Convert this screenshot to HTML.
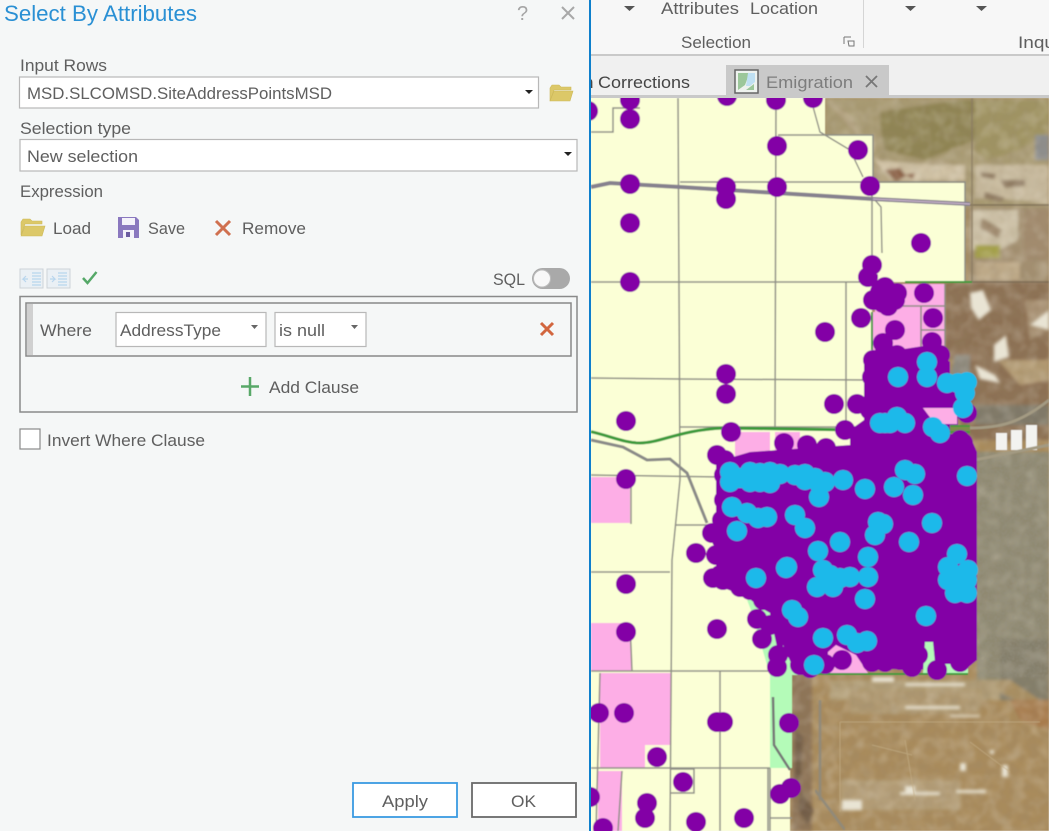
<!DOCTYPE html>
<html><head><meta charset="utf-8"><style>
html,body{margin:0;padding:0;width:1049px;height:831px;overflow:hidden;background:#f5f7f7}
svg{display:block}
text{font-family:"Liberation Sans",sans-serif;font-size:17px;fill:#5e5e5e}
</style></head><body>
<svg width="1049" height="831" viewBox="0 0 1049 831" xmlns="http://www.w3.org/2000/svg">
<defs>
<filter id="n" x="0" y="0" width="100%" height="100%"><feTurbulence type="fractalNoise" baseFrequency="0.1" numOctaves="2" seed="4"/><feColorMatrix values="0 0 0 0 .30  0 0 0 0 .24  0 0 0 0 .15  1 1 0 0 -.72"/><feGaussianBlur stdDeviation="1"/></filter>
<filter id="l" x="0" y="0" width="100%" height="100%"><feTurbulence type="fractalNoise" baseFrequency="0.08" numOctaves="2" seed="11"/><feColorMatrix values="0 0 0 0 .88  0 0 0 0 .83  0 0 0 0 .72  1 1 0 0 -.86"/><feGaussianBlur stdDeviation="1"/></filter>
<filter id="c" x="0" y="0" width="100%" height="100%"><feTurbulence type="fractalNoise" baseFrequency="0.4" numOctaves="2" seed="7"/><feColorMatrix values="0 0 0 0 .3  0 0 0 0 .28  0 0 0 0 .22  1.400 1.400 0 0 -1.050"/></filter>
<filter id="s"><feGaussianBlur stdDeviation="1.500"/></filter>
<filter id="t" x="-2%" y="-2%" width="104%" height="104%"><feGaussianBlur stdDeviation=".35"/></filter>
<filter id="m" x="0" y="0" width="100%" height="100%"><feGaussianBlur stdDeviation=".5"/></filter>
<clipPath id="map"><rect x="591" y="98" width="458" height="733"/></clipPath>
</defs>

<!-- ribbon -->
<rect x="591" y="0" width="458" height="54" fill="#f7f7f7"/>
<rect x="591" y="54" width="458" height="2" fill="#c9c9c9"/>
<rect x="591" y="56" width="458" height="39" fill="#f0f0f0"/>
<rect x="591" y="95" width="458" height="3" fill="#c9c9c9"/>
<rect x="726" y="65" width="163" height="30" fill="#c9c9c9"/>
<rect x="863" y="0" width="1" height="48" fill="#d5d5d5"/>
<path d="M624 6h11l-5.500 5zM905 6h11l-5.500 5zM976 6h11l-5.500 5z" fill="#555"/>
<path d="M844 37h7M844 37v7M848 41h6v5h-5z" stroke="#777" fill="none"/>
<rect x="735" y="70" width="23" height="23" fill="#eef2ee" stroke="#666" stroke-width="1.500"/>
<path d="M738 73h10v4l-3 8-7 5z" fill="#9cc79a"/><path d="M748 73h7v9l-5 4h-4z" fill="#bfe0f2"/><path d="M746 90l8-6v6z" fill="#9cc79a"/>
<path d="M866 76l11 11M877 76l-11 11" stroke="#777" stroke-width="1.800"/>

<!-- map -->
<g clip-path="url(#map)"><g filter="url(#m)">
<rect x="591" y="98" width="458" height="733" fill="#a98b5c"/>
<g filter="url(#s)">
<!-- north -->
<rect x="825" y="98" width="224" height="110" fill="#a89a72"/>
<path d="M880 112L960 100H975V140L950 150L925 160L885 150L880 125Z" fill="#8f8453"/>
<path d="M975 100H1049V130L1020 150L985 160L975 150Z" fill="#a09463"/>
<path d="M826 100L850 115L860 135L875 135V183H965V170L940 160L900 165L880 160Z" fill="#b5a583"/>
<path d="M875 160L890 180H965V165L930 165Z" fill="#d1c3a6"/>
<path d="M885 170l15-2 6 8-10 6zM905 175l10-2-2 6z" fill="#8a5f45"/>
<path d="M975 165H1049V205L1020 200L975 198Z" fill="#c9bb9f"/>
<path d="M980 172l16 2-2 5-12-2zM1000 180l25 0 0 6-20 2zM985 192l20 6-5 4-16-4z" fill="#8f7a62"/>
<rect x="1035" y="135" width="14" height="25" fill="#8d8f90"/>
<rect x="968" y="207" width="81" height="76" fill="#a38f70"/>
<path d="M972 210H1018V240L1000 250H972Z" fill="#cec2a8"/>
<path d="M982 218l20 12-4 8-18-10z" fill="#9b8468"/>
<path d="M1024 210H1049V260H1024Z" fill="#a28b6e"/>
<path d="M975 245H1000V258H975Z" fill="#a5a24a"/>
<path d="M975 262H1020V280H975Z" fill="#bda988"/>
<path d="M1018 282H1049V298H1018Z" fill="#4a4a22"/>
<!-- middle -->
<path d="M945 282H1049V440H960V360H945Z" fill="#8c6f52"/>
<path d="M955 355H970V375H950Z" fill="#8d8a80"/>
<path d="M1025 300H1049V330L1030 340Z" fill="#a68e70"/>
<path d="M998 360H1049V380L1020 385Z" fill="#b29a72"/>
<path d="M975 405H1049V425H975Z" fill="#7e7868"/>
<!-- city -->
<rect x="977" y="452" width="72" height="230" fill="#8f8a72"/>
<rect x="1000" y="640" width="49" height="60" fill="#837e6b"/>
<path d="M975 680H1010L1040 700H1049V720L1015 700Z" fill="#a98f62"/>
<!-- south -->
<path d="M1010 700H1049V730L1020 720Z" fill="#a87c4d"/>
<path d="M792 675H812V831H792Z" fill="#8d7356"/>
<path d="M795 730l8 6-2 40-6 8zM800 790l14 20-6 15-10-15z" fill="#6f5a45"/>
<path d="M830 680H1000V700H830Z" fill="#b09c74"/>
<path d="M850 690h130v24h-130z" fill="#af9870"/>
<path d="M840 780h120v30h-120z" fill="#b39c75"/>
</g>
<rect x="591" y="98" width="458" height="733" filter="url(#n)" opacity=".3"/>
<rect x="591" y="98" width="458" height="733" filter="url(#l)" opacity=".35"/>
<rect x="977" y="452" width="72" height="225" filter="url(#c)" opacity=".55"/>
<g fill="#e9e4d4" filter="url(#s)">
<path d="M970 293l13-3 8 20-12 10-8-12zM994 345l12-10 3 22-15 5zM1030 325l19-15v20zM975 365l20 10 5 8-20-4z"/>
<path d="M872 677h22v5h-22zM905 683h60v3h-60zM905 706h55v3h-55zM950 715h30v2h-30zM956 790h30v3h-30zM900 792h40v3h-40zM842 800h20v10h-20zM905 786h10v8h-10zM960 763h6v8h-6zM1002 765h6v12h-6zM990 750h4v4h-4z"/>
</g>
<path d="M840 722l200 0M840 722v90M872 745l40 10M905 740l10 60M970 742l40 30" stroke="#c2ad84" stroke-width="1" fill="none" opacity=".7"/>
<path d="M820 700v100M815 790l30 40" stroke="#8f8a7c" stroke-width="2.500" fill="none" filter="url(#m)"/>
<path d="M996 433h11v17h-11zM1011 430h11v20h-11zM1026 425h11v25h-11z" fill="#f3f3f0"/>
<path d="M970 428c30 0 50-5 79-28M975 460l74-15" stroke="#a39a82" stroke-width="3" fill="none"/>
<path d="M970 205H1049M965 282H1049" stroke="#6e5f4b" stroke-width="2" opacity=".5"/>
<path d="M972 98V283" stroke="#8a7b63" stroke-width="2" opacity=".6"/>

<!-- parcels -->
<path d="M591 98H825V135H873V183H965V282H872V430H860V600H770V768H790V831H591Z" fill="#fbffd6"/>
<path d="M745 590H860V675H770Z" fill="#b4fbb8"/>
<path d="M770 675H792V768H770Z" fill="#b4fbb8"/>
<path d="M875 284H945V355H872V312H875Z" fill="#fdaee6"/>
<path d="M735 432H770V460H735ZM775 432H800V452H775Z" fill="#fdaee6"/>
<path d="M591 477H630V523H591ZM591 623H631V671H591ZM600 673H671V745H645V768H600ZM598 771H622V831H598Z" fill="#fdaee6"/>

<!-- parcel lines -->
<g fill="none" stroke="#8f8f86" stroke-width="1.500">
<path d="M591 132H613V108H640M678 98L680 480L672 560L670 831M776 98L775 427M846 282V427M778 135H873V183M680 182H965V282M872 183V282H591"/>
<path d="M591 378L679 379L870 380M680 427H860M591 475L720 477M675 525H720M591 572H670M591 671H770M591 768H770M720 671V831M770 768V831M631 477V524M630 623L632 671M600 673L596 831M622 771L618 831M671 769H694V793H671M768 768V831M770 818H792M945 284V355M921 306V350M875 306H945M921 330H945"/>
<path d="M812 103L820 132L850 150L863 177M875 200L881 207L882 253" stroke-width="1.400"/>
<path d="M773 697L774 745L790 770" stroke="#777" stroke-width="2.500"/>
<path d="M591 187L610 183L680 187L777 193L873 199L970 204" stroke="#86818e" stroke-width="4"/>
<path d="M873 199L970 204" stroke="#c9b3cc" stroke-width="1.200"/>
<path d="M591 440L623 447L647 460L670 459L687 473L707 523" stroke="#8a8a88" stroke-width="3"/>
<path d="M591 431.700C610 436 625 443 640 443C660 443 680 430 723 428L857 430" stroke="#3a9a3a" stroke-width="3"/>
<path d="M905 282H972M872 312V350M800 674H968M950 426H970M950 432H970" stroke="#3a9a3a" stroke-width="2"/>
</g>

<!-- purple -->
<path d="M864 355L930 345L950 362V390L958 408V428L970 436L977 452V660L965 670L790 668L777 647L770 615L747 597L716 585V462L750 452L850 445V430L864 420Z" fill="#8300a6"/>
<path d="M923 408H957V424H935Z" fill="#fdaee6"/>
<path d="M950 425H970V434H950Z" fill="#7d8f4a"/>
<path d="M950 426H970M950 432H970" stroke="#3a9a3a" stroke-width="1.500"/>
<path d="M828 652L836 645L856 655L868 673H828Z" fill="#fdaee6"/>
<path d="M925 642L933 642L936 673H923ZM945 664H968V673H945ZM783 645L795 672H785ZM747 600L770 613L772 635L778 657H770Z" fill="#b4fbb8"/>
<path fill="none" stroke="#8300a6" stroke-width="20" stroke-linecap="round" d="
M588 111h0M630 100h0M630 119h0M727 96h0M776 100h0M813 98h0M777 146h0M858 150h0M630 184h0M726 187h0M726 199h0M777 187h0M870 186h0M630 223h0M921 243h0M630 282h0
M872 265h0M868 277h0M885 287h0M897 293h0M873 300h0M883 303h0M895 300h0M880 292h0M890 296h0M888 306h0M924 293h0M933 318h0M861 318h0M825 332h0M895 330h0M883 343h0M897 355h0M873 360h0M872 377h0M885 352h0M923 358h0M940 355h0M932 342h0M967 413h0M950 395h0
M726 374h0M726 394h0M626 421h0M834 404h0M857 404h0M731 432h0M845 430h0M626 479h0M717 455h0M725 460h0M696 553h0
M784 443h0M807 445h0M826 448h0M963 443h0M965 480h0M960 440h0M880 400h0M878 420h0M870 410h0M905 410h0M880 430h0
M724 475h0M724 500h0M722 520h0M712 533h0M722 540h0M716 555h0M720 575h0M713 578h0M723 580h0M740 587h0M750 590h0M763 600h0M757 619h0M762 639h0M770 625h0M778 655h0
M626 584h0M626 632h0M717 629h0M599 713h0M624 713h0M717 722h0M723 722h0M789 723h0M657 757h0M683 782h0M647 803h0M645 818h0M696 822h0M744 818h0M603 828h0M590 797h0M780 794h0M791 788h0
M777 667h0M842 660h0M912 667h0M937 670h0M810 668h0M800 665h0M825 664h0M872 662h0M885 662h0M900 660h0M960 662h0M967 650h0M967 630h0M967 610h0M918 655h0M795 650h0"/>
<!-- cyan -->
<path fill="none" stroke="#1fb9ea" stroke-width="20" stroke-linecap="round" d="
M927 362h0M898 377h0M927 377h0M947 383h0M958 383h0M967 382h0M965 393h0M963 408h0M885 423h0M880 423h0M890 423h0M897 417h0M905 423h0M933 427h0M940 433h0
M730 472h0M730 482h0M740 478h0M750 472h0M750 482h0M760 473h0M760 482h0M770 472h0M770 483h0M780 474h0M795 475h0M805 474h0M805 480h0M815 478h0M825 482h0M843 480h0M819 497h0M820 485h0
M865 489h0M905 470h0M915 474h0M894 487h0M913 495h0M967 476h0M732 507h0M747 513h0M758 518h0M767 517h0M795 515h0M805 528h0M737 531h0M878 522h0M883 524h0M875 535h0M932 523h0M909 542h0M840 542h0M818 551h0M868 557h0M957 554h0M787 567h0
M756 578h0M786 568h0M823 570h0M817 587h0M833 587h0M850 577h0M868 577h0M830 575h0M840 578h0M865 599h0M948 567h0M948 580h0M968 570h0M967 593h0M955 593h0M967 580h0M955 575h0M926 616h0M792 610h0M798 617h0M823 638h0M847 635h0M867 641h0M857 643h0M814 665h0"/>
</g></g>

<!-- ribbon text -->
<g filter="url(#t)">
<text x="661" y="14" textLength="78" lengthAdjust="spacingAndGlyphs">Attributes</text>
<text x="750" y="14" textLength="68" lengthAdjust="spacingAndGlyphs">Location</text>
<text x="681" y="48" textLength="70" lengthAdjust="spacingAndGlyphs">Selection</text>
<text x="1018" y="48" textLength="37" lengthAdjust="spacingAndGlyphs">Inqu</text>
<text x="584" y="88" style="fill:#444">n</text>
<text x="598" y="88" textLength="92" lengthAdjust="spacingAndGlyphs" style="fill:#444">Corrections</text>
<text x="766" y="88" textLength="87" lengthAdjust="spacingAndGlyphs" style="fill:#7d7d7d">Emigration</text>
</g>

<!-- panel -->
<rect x="0" y="0" width="589" height="831" fill="#f5f7f7"/>
<rect x="589" y="0" width="2" height="831" fill="#0f80cc"/>

<text x="4" y="21" textLength="193" lengthAdjust="spacingAndGlyphs" style="font-size:22px;fill:#2a90d4" filter="url(#t)">Select By Attributes</text>
<text x="517" y="20" style="font-size:20px;fill:#a5a5a5" filter="url(#t)">?</text>
<path d="M562 7l12 12M574 7l-12 12" stroke="#a8a8a8" stroke-width="2"/>

<g fill="#fff" stroke="#b8b8b8" stroke-width="1.200">
<rect x="19.500" y="77" width="519" height="31"/>
<rect x="20" y="139.500" width="557" height="31.500"/>
<rect x="116" y="312.500" width="150" height="34"/>
<rect x="275" y="312.500" width="91" height="34"/>
</g>
<path d="M525 90h8l-4 4zM564 152h8l-4 4z" fill="#222"/>
<path d="M251 325h7l-3.500 4zM351 325h7l-3.500 4z" fill="#666"/>

<!-- folders -->
<g fill="#dcc868" stroke="#cdb95a" stroke-width=".6">
<path d="M550 88l2-3h7l2 2h10v3h-17l-4 11z"/><path d="M550 101l4-10h19l-3 10z"/>
<path d="M21 222l2-3h7l2 2h10v3h-17l-4 11z"/><path d="M21 236l4-10h20l-3 10z"/>
</g>
<!-- save -->
<path d="M118 217h18l3 3v18h-21z" fill="#8a78bf"/><rect x="122" y="218" width="13" height="7" fill="#f4f2fa"/><rect x="123" y="230" width="11" height="8" fill="#f4f2fa"/><rect x="126" y="232" width="4" height="5" fill="#6c5ca0"/>
<!-- remove -->
<path d="M216 221l14 14M230 221l-14 14" stroke="#d0704f" stroke-width="3"/>

<!-- indent icons -->
<g fill="#eaf0f5" stroke="#cdd3d8"><rect x="20" y="269" width="23" height="19"/><rect x="47" y="269" width="23" height="19"/></g>
<path d="M32 273h9M32 276h9M32 279h9M32 282h9M32 285h9M58 273h9M58 276h9M58 279h9M58 282h9M58 285h9" stroke="#b8d6ee" stroke-width="1.200"/>
<path d="M28 279h-5l3-3M23 279l3 3M50 279h5l-3-3M55 279l-3 3" stroke="#b8d6ee" stroke-width="1.200" fill="none"/>
<path d="M83 278l4.500 5 9-11" stroke="#55a868" stroke-width="2.500" fill="none"/>

<!-- toggle -->
<rect x="532" y="268" width="38" height="21" rx="10.500" fill="#a9a9a9"/>
<circle cx="542" cy="278.500" r="8.500" fill="#f8f8f8" stroke="#bdbdbd"/>

<!-- expression box -->
<rect x="20" y="296.500" width="557" height="115.500" fill="none" stroke="#8a8a8a" stroke-width="1.500"/>
<rect x="26" y="303" width="545" height="53" fill="none" stroke="#888" stroke-width="1.500"/>
<rect x="27" y="304" width="6" height="51" fill="#d0d0d0"/>
<path d="M541 323l12 12M553 323l-12 12" stroke="#d2663f" stroke-width="3"/>
<path d="M250 377v19M241 386.500h18" stroke="#58a868" stroke-width="2.500"/>
<rect x="20" y="429" width="20" height="20" fill="#fff" stroke="#8a8a8a" stroke-width="1.200"/>

<!-- buttons -->
<rect x="353" y="783" width="104" height="34" fill="#fff" stroke="#3a9ae2" stroke-width="1.800"/>
<rect x="472" y="783" width="104" height="34" fill="#fff" stroke="#6a6a6a" stroke-width="1.800"/>

<g filter="url(#t)">
<text x="20" y="71" textLength="87" lengthAdjust="spacingAndGlyphs">Input Rows</text>
<text x="27" y="99" textLength="305" lengthAdjust="spacingAndGlyphs">MSD.SLCOMSD.SiteAddressPointsMSD</text>
<text x="20" y="134" textLength="111" lengthAdjust="spacingAndGlyphs">Selection type</text>
<text x="27" y="162" textLength="111" lengthAdjust="spacingAndGlyphs">New selection</text>
<text x="20" y="197" textLength="83" lengthAdjust="spacingAndGlyphs">Expression</text>
<text x="53" y="234" textLength="38" lengthAdjust="spacingAndGlyphs">Load</text>
<text x="148" y="234" textLength="37" lengthAdjust="spacingAndGlyphs">Save</text>
<text x="242" y="234" textLength="64" lengthAdjust="spacingAndGlyphs">Remove</text>
<text x="493" y="285" textLength="32" lengthAdjust="spacingAndGlyphs">SQL</text>
<text x="40" y="336" textLength="52" lengthAdjust="spacingAndGlyphs">Where</text>
<text x="120" y="336" textLength="101" lengthAdjust="spacingAndGlyphs">AddressType</text>
<text x="279" y="336" textLength="46" lengthAdjust="spacingAndGlyphs">is null</text>
<text x="269" y="393" textLength="90" lengthAdjust="spacingAndGlyphs">Add Clause</text>
<text x="47" y="446" textLength="158" lengthAdjust="spacingAndGlyphs">Invert Where Clause</text>
<text x="382" y="807" textLength="46" lengthAdjust="spacingAndGlyphs">Apply</text>
<text x="511" y="807" textLength="25" lengthAdjust="spacingAndGlyphs">OK</text>
</g>
</svg>
</body></html>
